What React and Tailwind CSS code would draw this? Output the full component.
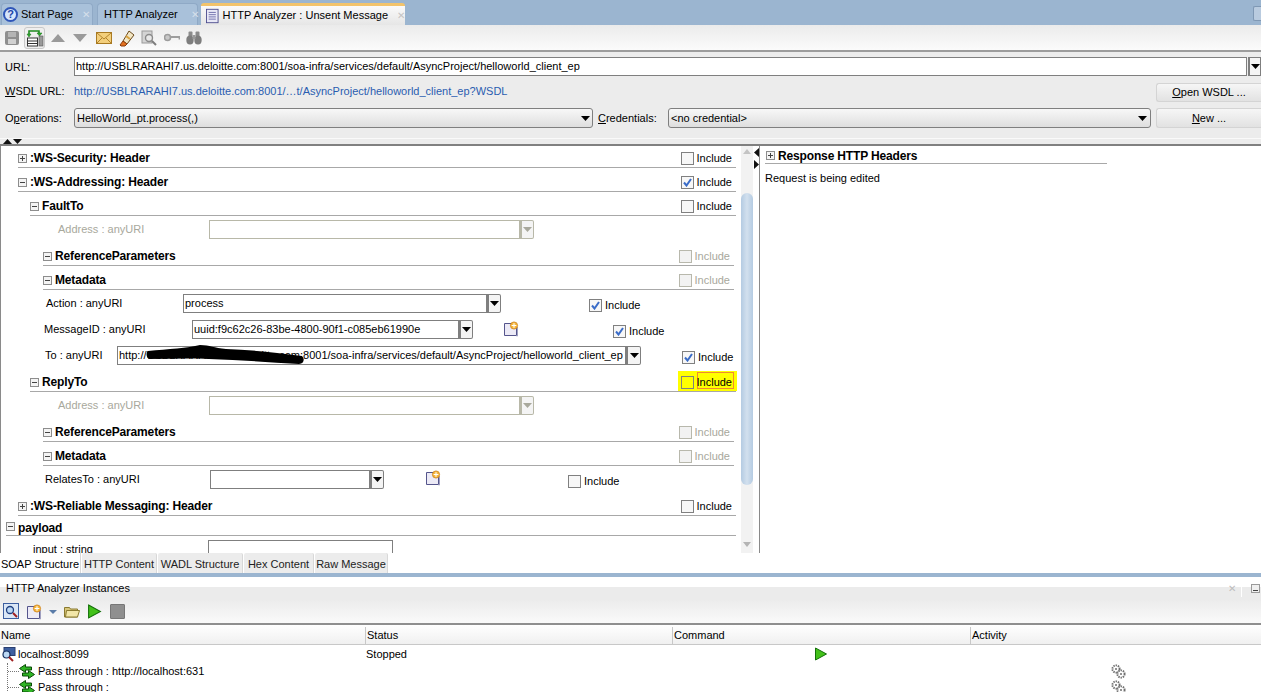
const FONT = "font-['Liberation_Sans',Arial,sans-serif]";

const SaveIcon = () => (
  <svg width="16" height="16" viewBox="0 0 16 16">
    <rect x="1" y="1" width="14" height="14" rx="2" fill="#8f8f8f" />
    <rect x="4" y="2" width="8" height="5" fill="#b5b5b5" />
    <rect x="4" y="9" width="8" height="5" fill="#d0d0d0" />
  </svg>
);

const SendIcon = () => (
  <svg width="18" height="20" viewBox="0 0 18 20">
    <path d="M3 7V3h10v3" fill="none" stroke="#1f8a1f" strokeWidth="1.6" />
    <path d="M1 6h4L3 9zM11 5h5l-2.5 3z" fill="#2fae2f" stroke="#146c14" strokeWidth=".5" />
    <rect x="1.5" y="10" width="10" height="8" fill="#fff" stroke="#333" />
    <path d="M2 13h9M2 15.5h9" stroke="#333" />
    <rect x="13" y="8" width="4" height="10" fill="#9a9a9a" stroke="#555" strokeWidth=".6" />
  </svg>
);

const EnvelopeIcon = () => (
  <svg width="16" height="12" viewBox="0 0 16 12">
    <rect x=".5" y=".5" width="15" height="11" fill="#f3cf7c" stroke="#a97a22" />
    <path d="M1 1l7 6 7-6M1 11l5-5M15 11l-5-5" fill="none" stroke="#b3842c" />
  </svg>
);

const EraserIcon = () => (
  <svg width="18" height="18" viewBox="0 0 18 18">
    <path d="M11 2l5 4-7 9-4-3z" fill="#f2e6c4" stroke="#6b4a1c" />
    <path d="M5 12l4 3-2 2H3l-1-1z" fill="#e2701f" stroke="#8a3c0c" />
    <path d="M8 7l4 3" stroke="#d9a441" strokeWidth="2" />
  </svg>
);

const DocSearchIcon = () => (
  <svg width="16" height="16" viewBox="0 0 16 16">
    <rect x="1" y="1" width="10" height="12" fill="#d4d4d4" stroke="#9a9a9a" />
    <circle cx="8" cy="8" r="3.5" fill="#e8e8e8" stroke="#8a8a8a" strokeWidth="1.4" />
    <path d="M11 11l4 4" stroke="#7d7d7d" strokeWidth="2" />
  </svg>
);

const KeyIcon = () => (
  <svg width="16" height="9" viewBox="0 0 16 9">
    <circle cx="3.5" cy="4.5" r="3" fill="#c8c8c8" stroke="#9d9d9d" strokeWidth="1.6" />
    <path d="M6.5 4h9v2.5" fill="none" stroke="#9d9d9d" strokeWidth="1.8" />
  </svg>
);

const BinocularsIcon = () => (
  <svg width="16" height="14" viewBox="0 0 16 14">
    <rect x="2.5" y="0.5" width="4" height="5" rx="1" fill="#8b8b8b" />
    <rect x="9.5" y="0.5" width="4" height="5" rx="1" fill="#8b8b8b" />
    <ellipse cx="4" cy="9" rx="3.7" ry="4.5" fill="#7e7e7e" />
    <ellipse cx="12" cy="9" rx="3.7" ry="4.5" fill="#7e7e7e" />
    <rect x="6.5" y="4" width="3" height="4" fill="#9a9a9a" />
  </svg>
);

const NewDocIcon = ({ size = 16 }) => (
  <svg width={size} height={size} viewBox="0 0 16 16">
    <path d="M1.5 2.5h9l3 3v9h-12z" fill="#eceaf6" stroke="#55558c" />
    <path d="M13.5 15h1V6" fill="none" stroke="#a0a0c0" />
    <circle cx="11" cy="4.5" r="3.6" fill="#f6b73c" stroke="#c97a16" strokeWidth=".7" />
    <path d="M11 2.2v4.6M8.7 4.5h4.6" stroke="#fff" strokeWidth="1.1" />
  </svg>
);

const PlayIcon = ({ size = 14 }) => (
  <svg width={size} height={size} viewBox="0 0 14 14">
    <path d="M1.5 1l11 6-11 6z" fill="#43c11a" stroke="#14700a" />
  </svg>
);

const GearIcon = () => (
  <svg width="15" height="15" viewBox="0 0 15 15">
    <circle cx="5" cy="5" r="3.6" fill="#fff" stroke="#6e6e6e" strokeWidth="1.9" strokeDasharray="1.4 .9" />
    <circle cx="5" cy="5" r="1" fill="#6e6e6e" />
    <circle cx="10" cy="10" r="3.6" fill="#fff" stroke="#6e6e6e" strokeWidth="1.9" strokeDasharray="1.4 .9" />
    <circle cx="10" cy="10" r="1" fill="#6e6e6e" />
  </svg>
);

const PassIcon = () => (
  <svg width="16" height="15" viewBox="0 0 16 15">
    <path d="M6.5.5L.5 4.5l6 4V6h6V3h-6z" fill="#2fb524" stroke="#0b4a08" />
    <path d="M9.5 6.5l6 4-6 4V12h-6V9h6z" fill="#2fb524" stroke="#0b4a08" />
  </svg>
);

const Caret = ({ className = "" }) => (
  <svg width="9" height="5" viewBox="0 0 9 5" className={className}>
    <path d="M0 0h9L4.5 5z" fill="currentColor" />
  </svg>
);

const Tab = ({ className, icon, label, closeClass }) => (
  <div className={`flex h-[22px] items-center whitespace-nowrap rounded-t-[4px] border border-b-0 border-[#8fa9c6] bg-[#a9c1da] ${className}`}>
    {icon}
    <span>{label}</span>
    <span className={`text-[10px] text-[#d5dfea] ${closeClass}`}>✕</span>
  </div>
);

const Toggle = ({ open }) => (
  <span className="relative block h-[9px] w-[9px] shrink-0 border border-[#8d8d8d] bg-[#f4f4f4]">
    <span className="absolute left-[1px] top-[3px] h-px w-[5px] bg-[#444]" />
    {!open && <span className="absolute left-[3px] top-[1px] h-[5px] w-px bg-[#444]" />}
  </span>
);

const Include = ({ checked, disabled, className = "", highlight }) => (
  <div className={`relative flex items-center gap-[3px] text-[11px] ${disabled ? "text-[#a8a89c]" : "text-black"} ${className}`}>
    {highlight && <span className="absolute -left-[3px] -top-[3px] h-[20px] w-[59px] bg-[#ffff00]" />}
    {highlight && <span className="absolute left-[16px] -top-[2px] h-[17px] w-[37px] border border-[#f08a30]" />}
    <span className={`relative flex h-[13px] w-[13px] items-center justify-center border ${disabled ? "border-[#b8b8ac] bg-[#f2f2f2]" : highlight ? "border-[#808080] bg-[#ffff00]" : "border-[#808080] bg-[#f7f7f7]"}`}>
      {checked && (
        <svg width="9" height="9" viewBox="0 0 9 9">
          <path d="M1 4.5L3.5 7.5 8 1" fill="none" stroke="#3a6cc8" strokeWidth="2" />
        </svg>
      )}
    </span>
    <span className="relative">Include</span>
  </div>
);

const Section = ({ title, open, h, className, include, titleClass = "pb-[2px]" }) => (
  <div className={`flex items-end border-b border-[#a8a8a8] ${h} ${className}`}>
    <div className="flex h-[17px] w-full items-center justify-between pr-[4px]">
      <div className="flex items-center gap-[3px] text-[12px] font-bold tracking-[-0.15px] text-black">
        <Toggle open={open} />
        <span className={titleClass}>{title}</span>
      </div>
      {include}
    </div>
  </div>
);

const Combo = ({ inputClass, btnClass, value, disabled }) => (
  <div className={`flex h-[19px] text-[11px] ${disabled ? "text-[#a8a89c]" : "text-black"}`}>
    <div className={`flex items-center border bg-white pl-px whitespace-nowrap ${disabled ? "border-[#b8b8a8]" : "border-[#7f7f7f]"} ${inputClass}`}>
      {value}
    </div>
    <div className={`flex items-center justify-center rounded-r-[2px] border border-l-2 bg-[#f4f4f4] ${disabled ? "border-[#b8b8a8] text-[#a8a89c]" : "border-[#7f7f7f] text-black"} ${btnClass}`}>
      <Caret />
    </div>
  </div>
);

const ToolBtn = ({ children, className = "" }) => (
  <div className={`flex items-center justify-center ${className}`}>{children}</div>
);

const Header = ({ className, children }) => (
  <div className={`flex items-center border-r border-[#c8c8c8] pl-[1px] ${className}`}>{children}</div>
);

const SubTab = ({ label, className }) => (
  <div className={`flex items-center justify-center rounded-t-[2px] border-r border-[#d8d8d8] bg-[#ececec] pt-[2px] text-[#222] ${className}`}>
    {label}
  </div>
);

export default function App() {
  return (
    <div className={`flex h-[692px] w-[1261px] flex-col overflow-hidden bg-white text-[11px] text-black ${FONT}`}>
      {/* document tabs */}
      <div className="relative flex h-[25px] shrink-0 items-end bg-[#9bb5d0] pl-px">
        <Tab
          className="w-[92px] pl-[1px]"
          label="Start Page"
          closeClass="ml-[9px]"
          icon={
            <span className="mr-[3px] flex h-[15px] w-[15px] items-center justify-center rounded-full border-2 border-[#2f56b8] bg-[#d7e5fa] text-[11px] font-bold leading-none text-[#2146a8]">
              ?
            </span>
          }
        />
        <Tab className="ml-[4px] w-[101px] pl-[6px]" label="HTTP Analyzer" closeClass="ml-[13px]" />
        <div className="ml-[3px] flex h-[22px] w-[204px] items-center whitespace-nowrap rounded-t-[3px] border-t-[3px] border-[#f2c36b] bg-linear-to-b from-[#fafafa] to-[#e6e6e6] pl-[5px]">
          <svg width="14" height="16" viewBox="0 0 14 16" className="mr-[4px]">
            <rect x=".5" y=".5" width="13" height="15" fill="#e8e8f6" stroke="#4a4a8c" />
            <path d="M3 4h8M3 6.5h8M3 9h8M3 11.5h8" stroke="#6a6aa8" />
          </svg>
          <span>HTTP Analyzer : Unsent Message</span>
          <span className="ml-[9px] text-[10px] text-[#c4c4c4]">✕</span>
        </div>
        <div className="absolute right-0 top-[6px] h-[15px] w-[8px] rounded-l-[2px] border border-r-0 border-[#7f98b4] bg-[#b9cbdf]" />
      </div>

      {/* toolbar */}
      <div className="flex h-[27px] shrink-0 items-center border-b-2 border-[#9c9c9c] bg-linear-to-b from-[#ebebeb] to-[#fbfbfb] pl-[4px]">
        <SaveIcon />
        <ToolBtn className="ml-[4px] h-[22px] w-[21px] rounded-[3px] border border-[#c8c8c8] bg-[#efefef]">
          <SendIcon />
        </ToolBtn>
        <svg width="14" height="8" viewBox="0 0 14 8" className="ml-[6px]">
          <path d="M0 8L7 0l7 8z" fill="#9a9a9a" />
        </svg>
        <svg width="14" height="8" viewBox="0 0 14 8" className="ml-[8px]">
          <path d="M0 0l7 8 7-8z" fill="#9a9a9a" />
        </svg>
        <span className="ml-[9px]"><EnvelopeIcon /></span>
        <span className="ml-[6px]"><EraserIcon /></span>
        <span className="ml-[5px]"><DocSearchIcon /></span>
        <span className="ml-[7px]"><KeyIcon /></span>
        <span className="ml-[6px]"><BinocularsIcon /></span>
      </div>

      {/* request form */}
      <div className="flex h-[94px] shrink-0 flex-col border-b-2 border-[#808080] bg-[#ececec]">
        <div className="mt-[5px] flex h-[19px] items-center pl-[5px]">
          <span className="w-[69px] pt-[2px]">URL:</span>
          <div className="flex h-[19px] w-[1173px] items-center border border-[#7f7f7f] bg-white pl-px">
            http://USBLRARAHI7.us.deloitte.com:8001/soa-infra/services/default/AsyncProject/helloworld_client_ep
          </div>
          <div className="ml-px flex h-[19px] w-[13px] items-center justify-center border border-l-2 border-[#7f7f7f] bg-[#f4f4f4]">
            <Caret />
          </div>
        </div>
        <div className="mt-[6px] flex h-[20px] items-center pl-[5px]">
          <span className="w-[69px] pb-[2px]"><u>W</u>SDL URL:</span>
          <span className="pb-[2px] text-[#2a5db0]">http://USBLRARAHI7.us.deloitte.com:8001/…t/AsyncProject/helloworld_client_ep?WSDL</span>
          <div className="ml-auto flex h-[19px] w-[105px] items-center justify-center rounded-l-[3px] border border-r-0 border-[#d4d4d4] bg-linear-to-b from-[#f6f6f6] to-[#e2e2e2]">
            <span><u>O</u>pen WSDL ...</span>
          </div>
        </div>
        <div className="mt-[6px] flex h-[20px] items-center pl-[5px]">
          <span className="w-[69px]">O<u>p</u>erations:</span>
          <div className="flex h-[20px] w-[519px] items-center justify-between rounded-[3px] border border-[#7f7f7f] bg-linear-to-b from-[#f8f8f8] to-[#dedede] pl-[2px] pr-[2px]">
            <span>HelloWorld_pt.process(,)</span>
            <Caret />
          </div>
          <span className="ml-[5px] w-[70px]"><u>C</u>redentials:</span>
          <div className="flex h-[20px] w-[483px] items-center justify-between rounded-[3px] border border-[#7f7f7f] bg-linear-to-b from-[#f8f8f8] to-[#dedede] pl-[2px] pr-[3px]">
            <span>&lt;no credential&gt;</span>
            <Caret />
          </div>
          <div className="ml-auto flex h-[20px] w-[105px] items-center justify-center rounded-l-[3px] border border-r-0 border-[#d4d4d4] bg-linear-to-b from-[#f6f6f6] to-[#e2e2e2]">
            <span><u>N</u>ew ...</span>
          </div>
        </div>
        <div className="mt-[10px] flex gap-[1px] border-t border-[#fafafa] pl-[3px]">
          <svg width="9" height="5" viewBox="0 0 9 5"><path d="M0 5h9L4.5 0z" fill="#111" /></svg>
          <svg width="9" height="5" viewBox="0 0 9 5"><path d="M0 0h9L4.5 5z" fill="#111" /></svg>
        </div>
      </div>

      {/* soap structure + response */}
      <div className="flex h-[407px] shrink-0">
        <div className="h-full w-[741px] shrink-0 overflow-hidden border-l border-[#8a8a8a]">
          <Section h="h-[22px]" className="ml-[17px] mr-[5px]" title=":WS-Security: Header" include={<Include />} />
          <Section h="h-[24px]" open className="ml-[17px] mr-[5px]" title=":WS-Addressing: Header" include={<Include checked />} />
          <Section h="h-[24px]" open className="ml-[29px] mr-[5px]" title="FaultTo" include={<Include />} />

          <div className="flex h-[27px] items-center">
            <span className="ml-[57px] w-[151px] text-[#a8a89c]">Address : anyURI</span>
            <Combo disabled inputClass="w-[311px]" btnClass="w-[14px]" />
          </div>
          <Section h="h-[23px]" open className="ml-[42px] mr-[7px]" title="ReferenceParameters" include={<Include disabled />} />
          <Section h="h-[24px]" open className="ml-[42px] mr-[7px]" title="Metadata" include={<Include disabled />} />

          <div className="flex h-[26px] items-center">
            <span className="ml-[45px] w-[137px]">Action : anyURI</span>
            <Combo value="process" inputClass="w-[304px]" btnClass="w-[14px]" />
            <Include checked className="ml-[88px] mt-[5px]" />
          </div>
          <div className="flex h-[26px] items-center">
            <span className="ml-[43px] w-[148px]">MessageID : anyURI</span>
            <Combo value="uuid:f9c62c26-83be-4800-90f1-c085eb61990e" inputClass="w-[267px]" btnClass="w-[14px]" />
            <span className="ml-[30px]"><NewDocIcon /></span>
            <Include checked className="ml-[94px] mt-[5px]" />
          </div>
          <div className="flex h-[26px] items-center">
            <span className="ml-[44px] w-[72px]">To : anyURI</span>
            <div className="relative">
              <Combo
                value="http://USBLRARAHI7.us.deloitte.com:8001/soa-infra/services/default/AsyncProject/helloworld_client_ep"
                inputClass="w-[509px]"
                btnClass="w-[15px]"
              />
              <svg width="160" height="20" viewBox="0 0 160 20" className="absolute left-[29px] top-[-1px]">
                <path d="M2 6c20-2 40-3 52-6 10 0 14 3 26 4 24 1 48 3 76 7 3 3 2 8-3 8-30-2-60-4-90-5-20-1-40 0-60 0-3-2-3-6-1-8z" fill="#000" />
              </svg>
            </div>
            <Include checked className="ml-[41px] mt-[5px]" />
          </div>

          <Section h="h-[24px]" open className="ml-[29px] mr-[5px]" title="ReplyTo" include={<Include highlight />} />
          <div className="flex h-[27px] items-center">
            <span className="ml-[57px] w-[151px] text-[#a8a89c]">Address : anyURI</span>
            <Combo disabled inputClass="w-[311px]" btnClass="w-[14px]" />
          </div>
          <Section h="h-[23px]" open className="ml-[42px] mr-[7px]" title="ReferenceParameters" include={<Include disabled />} />
          <Section h="h-[24px]" open className="ml-[42px] mr-[7px]" title="Metadata" include={<Include disabled />} />

          <div className="flex h-[26px] items-center">
            <span className="ml-[44px] w-[165px]">RelatesTo : anyURI</span>
            <Combo inputClass="w-[160px]" btnClass="w-[14px]" />
            <span className="ml-[41px] -mt-[2px]"><NewDocIcon /></span>
            <Include className="ml-[127px] mt-[4px]" />
          </div>

          <Section h="h-[24px]" className="ml-[17px] mr-[5px]" title=":WS-Reliable Messaging: Header" include={<Include />} />
          <Section h="h-[20px]" open className="ml-[5px] mr-[5px]" title="payload" titleClass="pt-[2px]" />
          <div className="flex items-start pt-[4px]">
            <span className="ml-[32px] mt-px w-[175px]">input : string</span>
            <div className="h-[40px] w-[185px] border border-[#7f7f7f] bg-white" />
          </div>
        </div>

        {/* scrollbar */}
        <div className="flex h-full w-[12px] shrink-0 flex-col items-center bg-[#f2f2f2]">
          <svg width="8" height="5" viewBox="0 0 8 5" className="mt-[3px]"><path d="M0 5h8L4 0z" fill="#c4c4c4" /></svg>
          <div className="mt-[39px] h-[292px] w-[12px] rounded-t-[6px] rounded-b-[6px] bg-linear-to-r from-[#b4cbe2] via-[#d2e0ee] to-[#b4cbe2]" />
          <svg width="8" height="5" viewBox="0 0 8 5" className="mt-auto mb-[6px]"><path d="M0 0h8L4 5z" fill="#b4b4b4" /></svg>
        </div>

        {/* splitter */}
        <div className="flex h-full w-[7px] shrink-0 flex-col items-center border-r border-[#8a8a8a] bg-white pt-[2px]">
          <svg width="5" height="9" viewBox="0 0 5 9"><path d="M5 0v9L0 4.5z" fill="#111" /></svg>
          <svg width="5" height="9" viewBox="0 0 5 9" className="mt-[3px]"><path d="M0 0v9l5-4.5z" fill="#111" /></svg>
        </div>

        <div className="flex-1 pl-[5px]">
          <div className="flex h-[18px] w-[342px] items-end border-b border-[#a8a8a8]">
            <div className="flex h-[15px] items-center gap-[3px] pl-px text-[12px] font-bold tracking-[-0.15px]">
              <Toggle />
              Response HTTP Headers
            </div>
          </div>
          <div className="mt-[6px]">Request is being edited</div>
        </div>
      </div>

      {/* lower tabs */}
      <div className="flex h-[20px] shrink-0">
        <div className="flex w-[81px] items-center justify-center border-r border-[#d8d8d8] bg-white pt-[2px]">SOAP Structure</div>
        <SubTab className="ml-px w-[75px]" label="HTTP Content" />
        <SubTab className="ml-px w-[85px]" label="WADL Structure" />
        <SubTab className="ml-px w-[70px]" label="Hex Content" />
        <SubTab className="ml-px w-[73px]" label="Raw Message" />
      </div>
      <div className="h-[4px] shrink-0 bg-[#9bb5d0]" />

      {/* instances panel */}
      <div className="flex h-[48px] shrink-0 flex-col border-b-2 border-[#8f8f8f] bg-[linear-gradient(#fff_0,#fff_10px,#ebebeb_10px,#ebebeb_22px,#fafafa_100%)]">
        <div className="flex h-[24px] items-center pb-px pl-[6px]">
          <span>HTTP Analyzer Instances</span>
          <span className="ml-auto text-[10px] text-[#bdbdbd]">✕</span>
          <span className="ml-[5px] h-[16px] w-px bg-[#fff]" />
          <span className="ml-[9px] mr-px flex h-[9px] w-[9px] items-end justify-center border border-[#9a9a9a] bg-[#f0f0f0] pb-px">
            <span className="h-px w-[5px] bg-[#444]" />
          </span>
        </div>
        <div className="flex h-[21px] items-center pl-[3px]">
          <svg width="16" height="17" viewBox="0 0 16 17">
            <rect x=".5" y=".5" width="15" height="15" fill="#dbe7f6" stroke="#3d5fa0" />
            <circle cx="7" cy="7" r="3.5" fill="#bcd8f4" stroke="#1f3f80" strokeWidth="1.3" />
            <path d="M10 10l4 4" stroke="#a02020" strokeWidth="2" />
          </svg>
          <span className="ml-[7px]"><NewDocIcon /></span>
          <svg width="8" height="4" viewBox="0 0 8 4" className="ml-[7px]"><path d="M0 0h8L4 4z" fill="#5a7ca8" /></svg>
          <svg width="16" height="13" viewBox="0 0 16 13" className="ml-[7px]">
            <path d="M.5 2.5h5l1 1.5h7v8h-13z" fill="#d8c67a" stroke="#8a7a30" />
            <path d="M2.5 5.5h13l-2 6.5h-12z" fill="#f2e6a8" stroke="#8a7a30" />
          </svg>
          <span className="ml-[7px]"><PlayIcon size={15} /></span>
          <span className="ml-[8px] h-[15px] w-[15px] rounded-[1px] border border-[#777] bg-[#8f8f8f]" />
        </div>
      </div>

      {/* instances table */}
      <div className="flex h-[20px] shrink-0 border-b border-[#c8c8c8] bg-linear-to-b from-white to-[#f0f0f0] pt-[2px]">
        <Header className="w-[366px]">Name</Header>
        <Header className="w-[307px] pl-[1px]">Status</Header>
        <Header className="w-[298px] pl-[1px]">Command</Header>
        <div className="flex items-center pl-[1px]">Activity</div>
      </div>
      <div className="flex-1">
        <div className="flex h-[18px] items-center">
          <div className="flex w-[366px] items-center pl-px">
            <svg width="15" height="15" viewBox="0 0 15 15" className="mr-[2px]">
              <rect x="3" y="0.5" width="11" height="8" fill="#3d5fa0" stroke="#2a3f70" />
              <circle cx="5.5" cy="7.5" r="3.5" fill="#bcd8f4" stroke="#163060" strokeWidth="1.2" />
              <path d="M8 10l4 4" stroke="#a02020" strokeWidth="2" />
            </svg>
            localhost:8099
          </div>
          <div className="w-[448px]">Stopped</div>
          <PlayIcon />
        </div>
        <div className="ml-[7px] border-l border-dotted border-[#777]">
          <div className="flex h-[16px] items-center">
            <div className="flex w-[1103px] items-center">
              <div className="h-px w-[11px] border-t border-dotted border-[#777]" />
              <PassIcon />
              <span className="ml-[3px]">Pass through : http://localhost:631</span>
            </div>
            <GearIcon />
          </div>
          <div className="flex h-[16px] items-center">
            <div className="flex w-[1103px] items-center">
              <div className="h-px w-[11px] border-t border-dotted border-[#777]" />
              <PassIcon />
              <span className="ml-[3px]">Pass through :</span>
            </div>
            <GearIcon />
          </div>
        </div>
      </div>
    </div>
  );
}
